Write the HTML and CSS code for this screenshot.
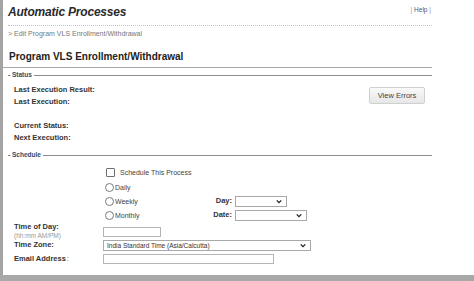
FILE: index.html
```html
<!DOCTYPE html>
<html lang="en">
<head>
	<meta charset="UTF-8">
	<title>Automatic Processes</title>
	<link rel="stylesheet" href="styles.css">
</head>
<body>
	<div class="page">
		<div class="content">
			<div class="header">
				<h1 class="title">Automatic Processes</h1>
				<div class="help"><span class="pipe">|</span> <a href="#">Help</a> <span class="pipe">|</span></div>
			</div>
			<div class="crumb">&gt; Edit Program VLS Enrollment/Withdrawal</div>
			<h2 class="heading">Program VLS Enrollment/Withdrawal</h2>

			<div class="legend"><span>- Status</span><i></i></div>
			<div class="status">
				<div class="status_rows">
					<div class="row">Last Execution Result:</div>
					<div class="row">Last Execution:</div>
					<div class="row"></div>
					<div class="row">Current Status:</div>
					<div class="row">Next Execution:</div>
				</div>
				<button class="btn">View Errors</button>
			</div>

			<div class="legend schedule_legend"><span>- Schedule</span><i></i></div>
			<div class="schedule">
				<div></div>
				<label class="opt check_opt"><span class="check"></span>Schedule This Process</label>
				<div></div><div></div>

				<div></div>
				<label class="opt"><span class="radio"></span>Daily</label>
				<div></div><div></div>

				<div></div>
				<label class="opt"><span class="radio"></span>Weekly</label>
				<div class="lbl_r">Day:</div>
				<div class="cell"><div class="sel sel_day"><span></span><svg viewBox="0 0 8 6" width="6" height="5"><path d="M1 1.5 L4 4.5 L7 1.5" fill="none" stroke="#222" stroke-width="1.8"/></svg></div></div>

				<div></div>
				<label class="opt"><span class="radio"></span>Monthly</label>
				<div class="lbl_r">Date:</div>
				<div class="cell"><div class="sel sel_date"><span></span><svg viewBox="0 0 8 6" width="6" height="5"><path d="M1 1.5 L4 4.5 L7 1.5" fill="none" stroke="#222" stroke-width="1.8"/></svg></div></div>

				<div class="lbl time_lbl">Time of Day:<small>(hh:mm AM/PM)</small></div>
				<div class="cell cell_top span3"><div class="inp inp_time"></div></div>

				<div class="lbl">Time Zone:</div>
				<div class="cell span3"><div class="sel sel_tz"><span>India Standard Time (Asia/Calcutta)</span><svg viewBox="0 0 8 6" width="6" height="5"><path d="M1 1.5 L4 4.5 L7 1.5" fill="none" stroke="#222" stroke-width="1.8"/></svg></div></div>

				<div class="lbl">Email Address<span class="colon">:</span></div>
				<div class="cell span3"><div class="inp inp_email"></div></div>
			</div>
		</div>
	</div>
	<div class="footer"></div>
</body>
</html>
```

FILE: styles.css
```css
*{
	margin: 0;
	padding: 0;
	box-sizing: border-box;
}
body{
	width: 474px;
	height: 281px;
	overflow: hidden;
	background: #fff;
	font-family: "Liberation Sans", Arial, sans-serif;
	color: #333;
}
.page{
	height: 275px;
	border-left: 3px solid #a3a3a3;
	padding-left: 5px;
}
.content{
	width: 424px;
}
.header{
	height: 26px;
	display: flex;
	justify-content: space-between;
	border-bottom: 1px dotted #c4c4c4;
}
.title{
	font-size: 12px;
	font-weight: bold;
	font-style: italic;
	line-height: 22px;
	padding-top: 1px;
	color: #2b2b2b;
	letter-spacing: -0.2px;
}
.help{
	font-size: 6.5px;
	line-height: 20px;
	padding-right: 1px;
	color: #999;
}
.help a{
	color: #3a5d88;
	text-decoration: none;
}
.crumb{
	font-size: 7px;
	line-height: 10px;
	padding-top: 3px;
	color: #777;
}
.heading{
	font-size: 10px;
	font-weight: bold;
	line-height: 14px;
	margin-top: 11px;
	margin-left: -5px;
	padding-left: 6px;
	padding-bottom: 3px;
	border-bottom: 1px solid #a8a8a8;
	color: #222;
}
.legend{
	display: flex;
	align-items: center;
	height: 11px;
	margin-top: 1px;
	font-size: 6.5px;
	font-weight: bold;
	color: #2e4d6b;
}
.legend i{
	flex: 1;
	height: 1px;
	margin-left: 2px;
	margin-top: 1px;
	background: #8c8c8c;
}
.status{
	display: flex;
	justify-content: space-between;
	padding-top: 4px;
}
.status_rows{
	padding-left: 6px;
}
.row{
	height: 12px;
	line-height: 12px;
	font-size: 7.5px;
	font-weight: bold;
	color: #333;
}
.btn{
	width: 56px;
	height: 17px;
	margin-top: 3px;
	margin-right: 7px;
	font-family: "Liberation Sans", Arial, sans-serif;
	font-size: 7.5px;
	color: #444;
	background: linear-gradient(#fafafa, #e6e6e6);
	border: 1px solid #d0d0d0;
	border-radius: 2px;
}
.schedule_legend{
	margin-top: 5px;
}
.schedule{
	display: grid;
	grid-template-columns: 89px 110px 22px auto;
	grid-template-rows: 15px 14px 14px 14px 16px 14px 14px;
	margin-top: 5px;
	margin-left: 6px;
	font-size: 7px;
	color: #444;
}
.schedule .span3{
	grid-column: span 3;
}
.opt{
	display: flex;
	align-items: center;
	padding-left: 2px;
}
.check_opt{
	padding-left: 3px;
}
.check{
	width: 9px;
	height: 9px;
	border: 1px solid #6f6f6f;
	border-radius: 1px;
	margin-right: 5px;
}
.radio{
	width: 9px;
	height: 9px;
	border: 1px solid #7a7a7a;
	border-radius: 50%;
	margin-right: 1px;
}
.lbl_r{
	text-align: right;
	padding-right: 3px;
	line-height: 14px;
	font-size: 7.5px;
	font-weight: bold;
	color: #333;
}
.lbl{
	line-height: 14px;
	font-size: 7.5px;
	font-weight: bold;
	color: #333;
}
.colon{
	padding-left: 1px;
	font-weight: normal;
}
.time_lbl{
	line-height: 9px;
}
.time_lbl small{
	display: block;
	font-size: 6.5px;
	font-weight: normal;
	color: #999;
}
.cell{
	display: flex;
	align-items: center;
}
.cell_top{
	align-items: flex-start;
}
.sel{
	height: 11px;
	border: 1px solid #a9a9a9;
	display: flex;
	align-items: center;
	justify-content: space-between;
	padding: 0 4px 0 3px;
	font-size: 6.5px;
	color: #333;
	background: #fff;
}
.sel_day{
	width: 52px;
}
.sel_date{
	width: 72px;
}
.sel_tz{
	width: 208px;
}
.inp{
	height: 10px;
	border: 1px solid #b5b5b5;
	background: #fff;
}
.inp_time{
	width: 58px;
	margin-top: 5px;
}
.inp_email{
	width: 171px;
}
.footer{
	height: 6px;
	background: #a8a8a8;
}
```
